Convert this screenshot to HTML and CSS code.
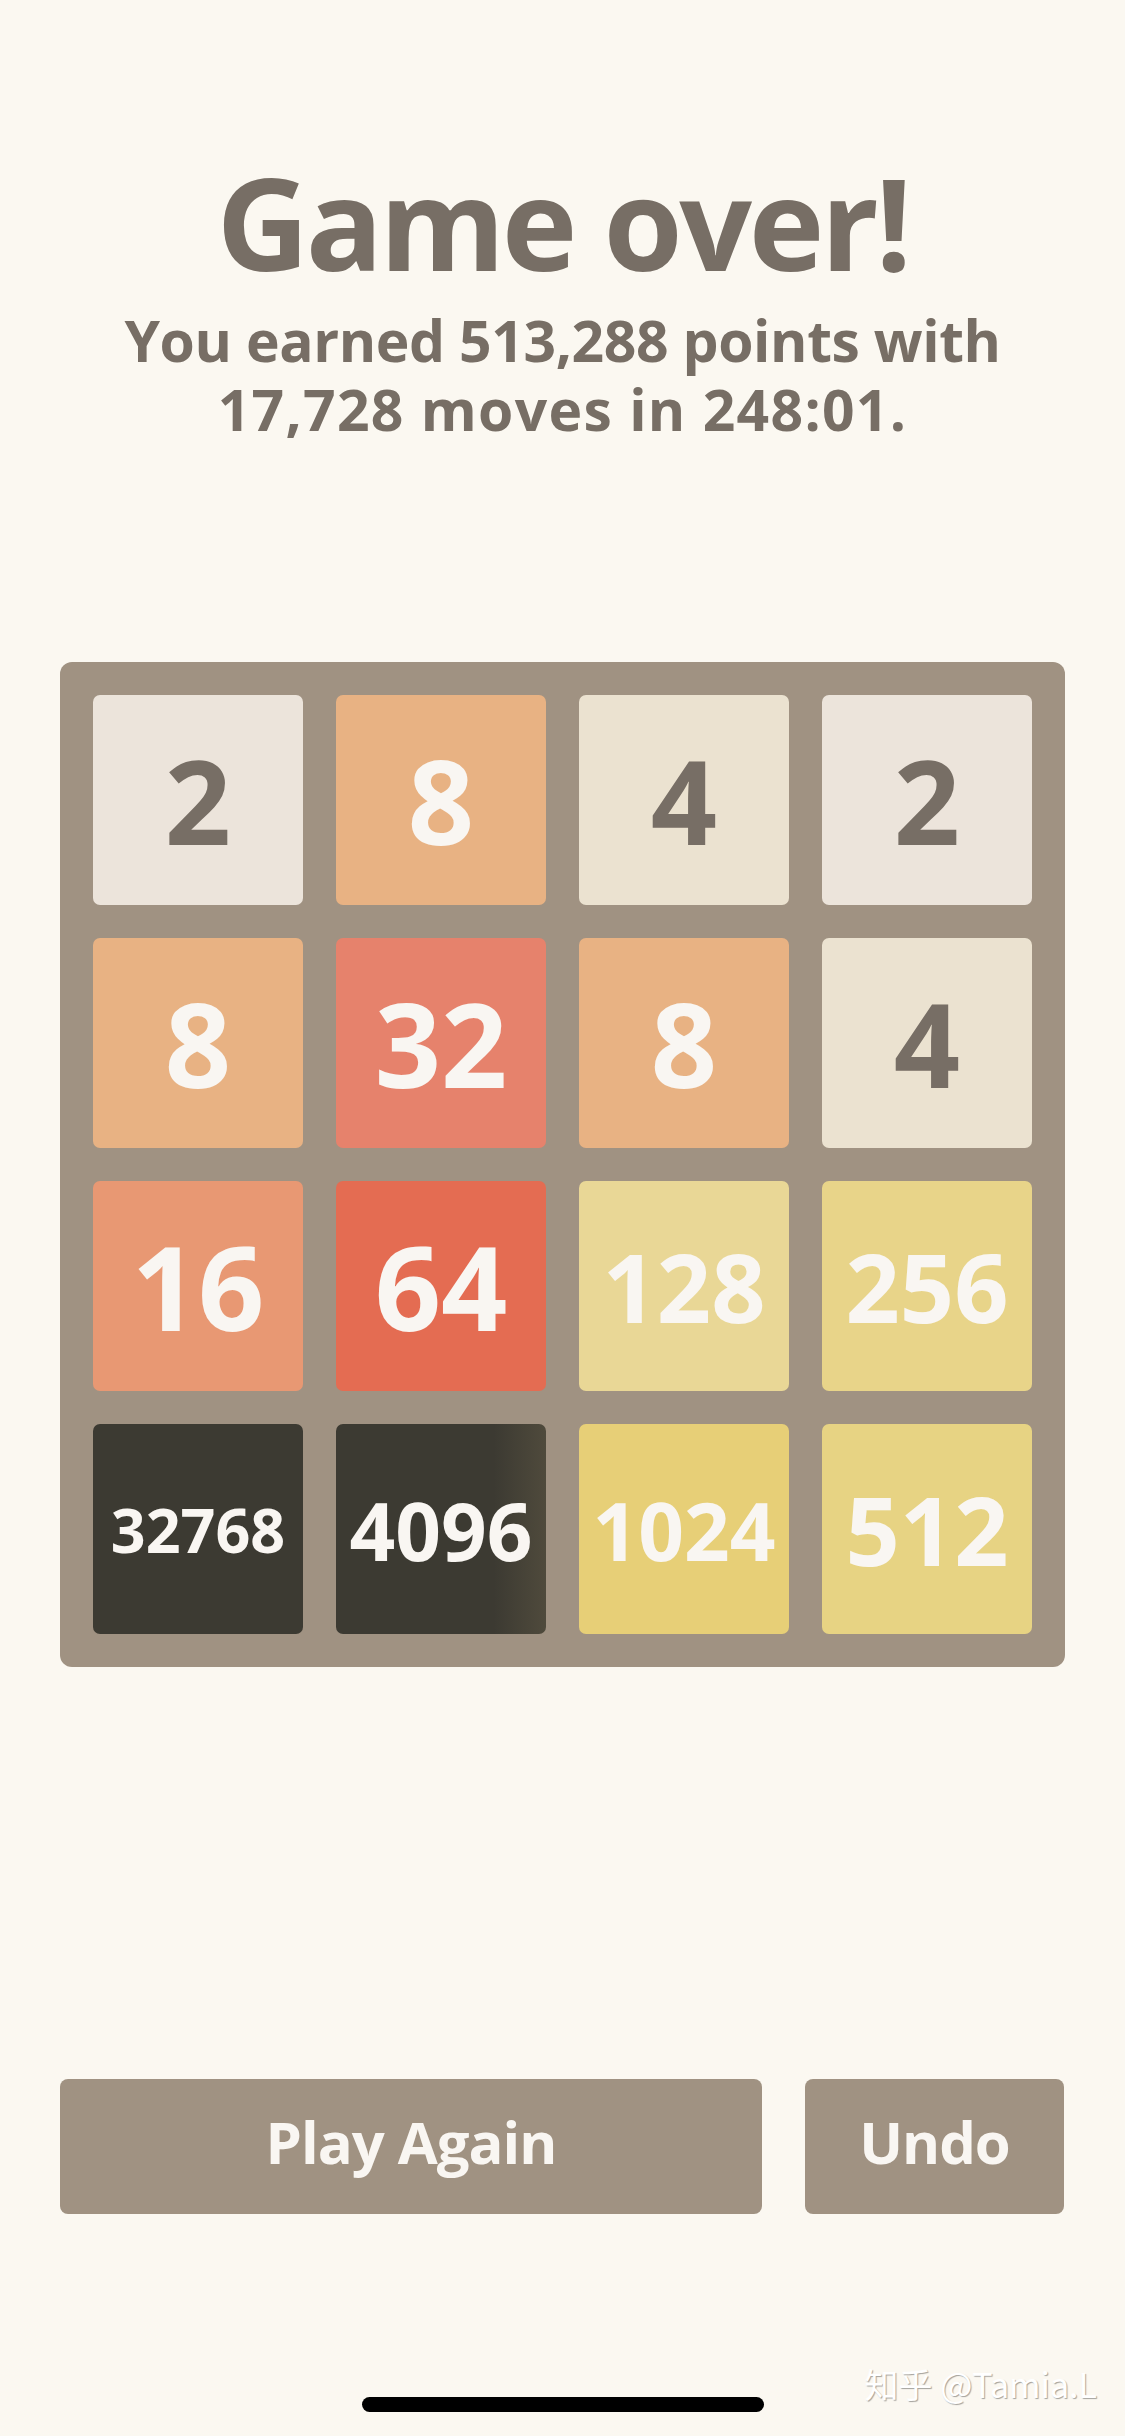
FILE: index.html
```html
<!DOCTYPE html>
<html lang="en">
<head>
<meta charset="UTF-8" />
<meta name="viewport" content="width=device-width, initial-scale=1.0" />
<title>2048 - Game over</title>
<link rel="stylesheet" href="styles.css">
</head>
<body>
<div class="screen">

<!-- result -->
<div class="result">
    <h1 class="result-title">Game over!</h1>
    <p class="result-text">
        <span class="result-line">You earned 513,288 points with</span>
        <span class="result-line result-stats">17,728 moves in 248:01.</span>
    </p>
</div>

<!-- board -->
<div class="board">
    <div class="tile tile-2">2</div>
    <div class="tile tile-8">8</div>
    <div class="tile tile-4">4</div>
    <div class="tile tile-2">2</div>

    <div class="tile tile-8">8</div>
    <div class="tile tile-32">32</div>
    <div class="tile tile-8">8</div>
    <div class="tile tile-4">4</div>

    <div class="tile tile-16">16</div>
    <div class="tile tile-64">64</div>
    <div class="tile tile-128 digits-3">128</div>
    <div class="tile tile-256 digits-3">256</div>

    <div class="tile tile-super digits-5">32768</div>
    <div class="tile tile-4096 digits-4">4096</div>
    <div class="tile tile-1024 digits-4">1024</div>
    <div class="tile tile-512 digits-3">512</div>
</div>

<!-- actions -->
<div class="actions">
    <button class="btn btn-play">Play Again</button>
    <button class="btn btn-undo">Undo</button>
</div>

<div class="home-bar"></div>
<span class="watermark">知乎 @Tamia.L</span>
</div>
</body>
</html>
```

FILE: styles.css
```css
body {
    margin: 0;
    background-color: #fbf8f1;
    font-family: 'Open Sans', 'Noto Sans CJK SC', sans-serif;
    color: #776e65;
}
.screen {
    position: relative;
    width: 1125px;
    height: 2436px;
    padding: 158px 60px 0;
    box-sizing: border-box;
}
.result {
    text-align: center;
}
.result-title {
    margin: 0;
    font-size: 128px;
    line-height: 128px;
    font-weight: 700;
    letter-spacing: -3.5px;
}
.result-text {
    margin: 24px 0 0;
    font-size: 57px;
    font-weight: 700;
    letter-spacing: -0.4px;
}
.result-line {
    display: block;
    height: 69px;
    line-height: 61px;
}
.result-stats {
    letter-spacing: 1.3px;
}
.board {
    margin-top: 214px;
    width: 1005px;
    height: 1005px;
    box-sizing: border-box;
    padding: 33px;
    display: grid;
    grid-template-columns: repeat(4, 210px);
    grid-template-rows: repeat(4, 210px);
    gap: 33px;
    background-color: #a09282;
    border-radius: 12px;
}
.tile {
    display: flex;
    align-items: center;
    justify-content: center;
    border-radius: 7px;
    font-size: 116px;
    font-weight: 700;
    color: #f9f6f2;
}
.digits-3 { font-size: 95px; }
.digits-4 { font-size: 80px; }
.digits-5 { font-size: 61px; }

.tile-2 { background-color: #ece4db; color: #776e65; }
.tile-4 { background-color: #ebe2d0; color: #776e65; }
.tile-8 { background-color: #e8b283; }
.tile-16 { background-color: #e89873; }
.tile-32 { background-color: #e6826c; }
.tile-64 { background-color: #e46c52; }
.tile-128 { background-color: #e9d796; }
.tile-256 { background-color: #e8d489; }
.tile-512 { background-color: #e7d383; }
.tile-1024 { background-color: #e7cf77; }
.tile-4096 { background: linear-gradient(90deg, #3c3a32 75%, #4f4a3c 100%); }
.tile-super { background-color: #3c3a32; }

.actions {
    margin-top: 412px;
    display: flex;
    gap: 43px;
}
.btn {
    height: 135px;
    border: none;
    border-radius: 8px;
    background-color: #a09282;
    color: #f9f6f2;
    font-family: 'Open Sans', sans-serif;
    font-size: 58px;
    font-weight: 700;
    letter-spacing: -1px;
    padding: 0 0 10px;
}
.btn-play { width: 702px; }
.btn-undo { width: 259px; }

.home-bar {
    margin: 183px auto 0;
    width: 402px;
    height: 15px;
    border-radius: 8px;
    background-color: #000;
}
.watermark {
    position: absolute;
    right: 28px;
    bottom: 28px;
    font-family: 'Noto Sans CJK SC', sans-serif;
    font-size: 34px;
    color: #ffffff;
    text-shadow: 1px 1px 1px rgba(0, 0, 0, 0.35);
}
```
